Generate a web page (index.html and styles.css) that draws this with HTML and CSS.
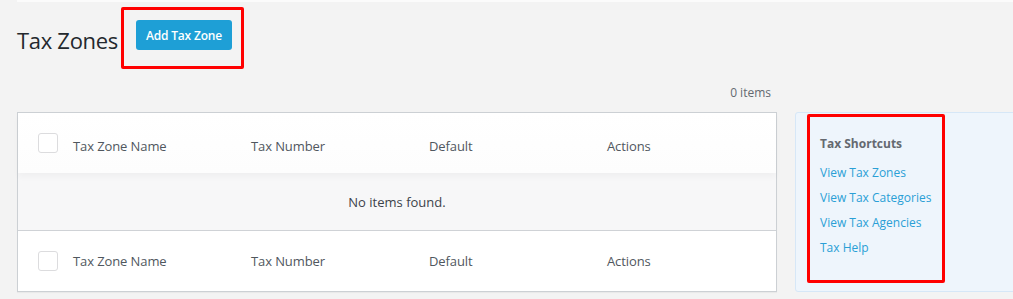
FILE: index.html
```html
<!DOCTYPE html>
<html>
<head>
<meta charset="utf-8">
<link rel="stylesheet" href="styles.css">
</head>
<body>
<div class="topline"></div>
<div class="page">
  <div class="header">
    <h1 class="title">Tax Zones</h1>
    <div class="highlight">
      <button class="btn">Add Tax Zone</button>
    </div>
  </div>
  <div class="main">
    <div class="list">
      <div class="count">0 items</div>
      <div class="table">
        <div class="row head">
          <div class="cell check"><span class="box"></span></div>
          <div class="cell">Tax Zone Name</div>
          <div class="cell">Tax Number</div>
          <div class="cell">Default</div>
          <div class="cell last">Actions</div>
        </div>
        <div class="row empty">No items found.</div>
        <div class="row foot">
          <div class="cell check"><span class="box"></span></div>
          <div class="cell">Tax Zone Name</div>
          <div class="cell">Tax Number</div>
          <div class="cell">Default</div>
          <div class="cell last">Actions</div>
        </div>
      </div>
    </div>
    <div class="sidebar">
      <div class="highlight side">
        <h3 class="side-title">Tax Shortcuts</h3>
        <a class="link" href="#">View Tax Zones</a>
        <a class="link" href="#">View Tax Categories</a>
        <a class="link" href="#">View Tax Agencies</a>
        <a class="link" href="#">Tax Help</a>
      </div>
    </div>
  </div>
</div>
</body>
</html>
```
FILE: styles.css
```css
html, body {
  margin: 0;
  padding: 0;
}
body {
  background: #f3f3f3;
  font-family: "Open Sans", "Noto Sans", sans-serif;
  color: #50575e;
  width: 1013px;
  height: 299px;
  overflow: hidden;
}
.topline {
  height: 2px;
  margin-left: 17px;
  background: #fbfbfb;
}
.page {
  padding-left: 17px;
}
.header {
  display: flex;
  align-items: flex-start;
  height: 62px;
  margin-top: 5px;
}
.title {
  margin: 18px 0 0 0;
  font-size: 22px;
  font-weight: 400;
  color: #23282d;
  letter-spacing: -0.3px;
  line-height: 30px;
  width: 104px;
}
.highlight {
  border: 3px solid #ff0000;
  border-radius: 2px;
}
.header .highlight {
  width: 123px;
  height: 62px;
  box-sizing: border-box;
  padding: 10px 0 0 12px;
}
.btn {
  width: 96px;
  height: 30px;
  border: 0;
  border-radius: 3px;
  background: #1e9fd6;
  color: #ffffff;
  font-family: "Open Sans", sans-serif;
  font-size: 12px;
  font-weight: 600;
  padding: 0;
  letter-spacing: -0.2px;
}
.main {
  display: flex;
  gap: 18px;
}
.list {
  width: 760px;
  flex: none;
}
.count {
  text-align: right;
  font-size: 12px;
  color: #646970;
  height: 18px;
  line-height: 18px;
  padding-right: 6px;
  margin-top: 15px;
  margin-bottom: 10px;
}
.table {
  border: 1px solid #ccd0d4;
  background: #ffffff;
  box-shadow: 0 1px 1px rgba(0,0,0,0.04);
}
.row {
  display: flex;
  align-items: center;
}
.head {
  height: 60px;
  background: linear-gradient(#ffffff, #fdfdfd);
  box-shadow: 0 4px 6px rgba(0,0,0,0.03);
  position: relative;
}
.head .cell {
  padding-top: 6px;
}
.head .cell.check {
  padding-top: 0;
}
.foot {
  height: 60px;
  border-top: 1px solid #cfd2d6;
}
.cell {
  flex: none;
  width: 178px;
  font-size: 13px;
  color: #50575e;
  letter-spacing: -0.1px;
}
.cell.last {
  flex: 1;
  width: auto;
}
.check {
  width: 20px;
  padding-left: 20px;
  padding-right: 15px;
  display: flex;
  align-items: center;
}
.box {
  display: block;
  width: 18px;
  height: 18px;
  border: 1px solid #dcdcde;
  border-radius: 3px;
  background: #fff;
}
.empty {
  height: 57px;
  background: #f7f7f8;
  justify-content: center;
  font-size: 13px;
  color: #3c434a;
}
.sidebar {
  width: 240px;
  flex: none;
  margin-top: 43px;
  height: 180px;
  box-sizing: border-box;
  background: #eef5fc;
  border: 1px solid #d6e7f7;
  border-radius: 3px;
  padding: 1px 0 0 11px;
}
.side {
  width: 138px;
  height: 169px;
  box-sizing: border-box;
  padding: 18px 0 0 10px;
  display: flex;
  flex-direction: column;
}
.side-title {
  margin: 0 0 11px 0;
  font-size: 12px;
  font-weight: 700;
  color: #646970;
  line-height: 18px;
}
.link {
  font-size: 12px;
  color: #2a9fd6;
  text-decoration: none;
  line-height: 18px;
  margin-bottom: 7px;
}
```
